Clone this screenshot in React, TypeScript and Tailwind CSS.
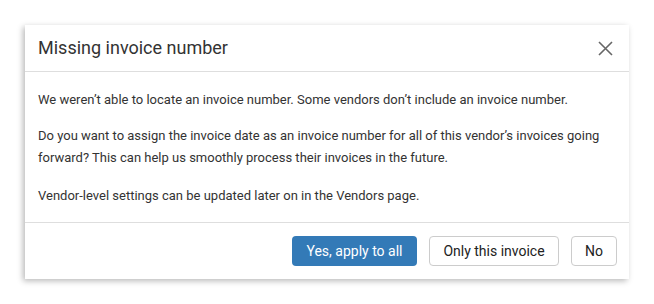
import React from "react";

export default function App() {
  return (
    <div className="w-[654px] h-[304px] bg-white pt-[25px] pl-[25px]" style={{ fontFamily: "Roboto, 'Liberation Sans', sans-serif" }}>
      <div className="w-[604px] h-[254px] bg-white flex flex-col shadow-[-2px_2px_6px_rgba(0,0,0,0.28)]">
        <div className="h-[47px] flex items-center justify-between pl-[13px] pr-[16px] border-b border-[#dedede]">
          <div className="text-[18px] text-[#333] leading-none">Missing invoice number</div>
          <svg width="15" height="15" viewBox="0 0 15 15" className="text-[#666]">
            <path d="M1 1L14 14M14 1L1 14" stroke="currentColor" strokeWidth="1.6" />
          </svg>
        </div>
        <div className="flex-1 pl-[13px] pt-[17px] text-[13px] leading-[22px] text-[#333]">
          <p>We weren’t able to locate an invoice number. Some vendors don’t include an invoice number.</p>
          <p className="mt-[14px]">Do you want to assign the invoice date as an invoice number for all of this vendor’s invoices going forward? This can help us smoothly process their invoices in the future.</p>
          <p className="mt-[16px]">Vendor-level settings can be updated later on in the Vendors page.</p>
        </div>
        <div className="h-[57px] border-t border-[#dedede] flex items-center justify-end gap-[12px] pr-[12px]">
          <button className="h-[30px] w-[125px] rounded-[4px] bg-[#337ab7] text-white text-[14px]">Yes, apply to all</button>
          <button className="h-[30px] w-[130px] rounded-[4px] border border-[#ccc] bg-white text-[#222] text-[14px]">Only this invoice</button>
          <button className="h-[30px] w-[46px] rounded-[4px] border border-[#ccc] bg-white text-[#222] text-[14px]">No</button>
        </div>
      </div>
    </div>
  );
}
